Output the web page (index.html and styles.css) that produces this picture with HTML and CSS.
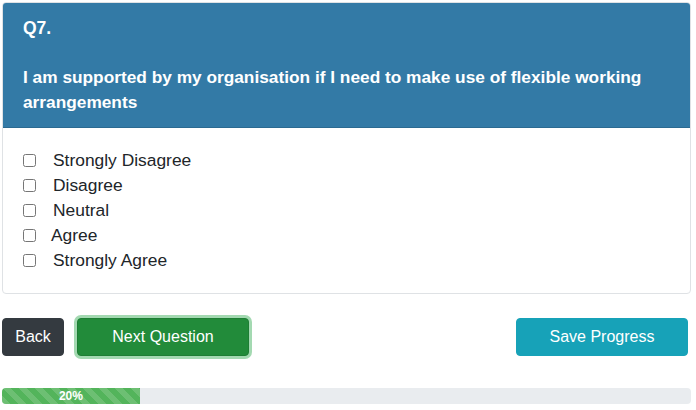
FILE: index.html
```html
<!DOCTYPE html>
<html>
<head>
<meta charset="utf-8">
<link rel="stylesheet" href="styles.css">
</head>
<body>
<div class="card">
  <div class="card-header">
    <div class="qnum">Q7.</div>
    <div class="qtext">I am supported by my organisation if I need to make use of flexible working arrangements</div>
  </div>
  <div class="card-body">
    <label class="opt"><input type="checkbox"><span class="lbl">Strongly Disagree</span></label>
    <label class="opt"><input type="checkbox"><span class="lbl">Disagree</span></label>
    <label class="opt"><input type="checkbox"><span class="lbl">Neutral</span></label>
    <label class="opt"><input type="checkbox"><span class="lbl agree">Agree</span></label>
    <label class="opt"><input type="checkbox"><span class="lbl">Strongly Agree</span></label>
  </div>
</div>
<div class="actions">
  <button class="btn btn-dark">Back</button>
  <button class="btn btn-success focus">Next Question</button>
  <span class="spacer"></span>
  <button class="btn btn-info">Save Progress</button>
</div>
<div class="progress">
  <div class="progress-bar" style="width:20%">20%</div>
</div>
</body>
</html>
```
FILE: styles.css
```css
html, body { margin: 0; padding: 0; background: #fff; }
body {
  padding: 2px 5px 0 2px;
  font-family: "Liberation Sans", Arial, sans-serif;
  color: #212529;
  font-size: 16px;
}
.card {
  border: 1px solid #dfe2e5;
  border-radius: 4px;
  overflow: hidden;
}
.card-header {
  background: #337aa6;
  color: #fff;
  font-weight: bold;
  padding: 15px 20px 12px 20px;
  border-bottom: 1px solid #2b6a91;
}
.qnum { font-size: 17.5px; line-height: 20px; margin-bottom: 27px; }
.qtext { font-size: 17.3px; line-height: 25px; }
.card-body {
  padding: 20px 20px 20px 20px;
  display: flex;
  flex-direction: column;
}
.opt {
  display: flex;
  align-items: center;
  height: 25px;
}
.opt input {
  margin: 0 17px 0 0;
  width: 13px;
  height: 13px;
}
.lbl { font-size: 17.4px; }
.lbl.agree { margin-left: -2px; }
.actions {
  display: flex;
  align-items: center;
  margin-top: 24px;
}
.spacer { flex: 1; }
.btn {
  font-family: "Liberation Sans", Arial, sans-serif;
  font-size: 16px;
  height: 38px;
  border: 1px solid transparent;
  border-radius: 4px;
  color: #fff;
  padding: 0 12px;
  cursor: pointer;
}
.btn-dark { background: #343a40; border-color: #343a40; width: 62px; }
.btn-success {
  background: #228b3a;
  border-color: #1e7e34;
  width: 172px;
  margin-left: 13px;
}
.btn-success.focus { box-shadow: 0 0 0 3px #a3d9b1; }
.btn-info { background: #17a2b8; border-color: #17a2b8; width: 172px; margin-right: 3px; }
.progress {
  margin-top: 32px;
  height: 16px;
  background: #e9ecef;
  border-radius: 4px;
  overflow: hidden;
  display: flex;
}
.progress-bar {
  background-color: #53b45b;
  background-image: linear-gradient(45deg, rgba(255,255,255,.15) 25%, transparent 25%, transparent 50%, rgba(255,255,255,.15) 50%, rgba(255,255,255,.15) 75%, transparent 75%, transparent);
  background-size: 16px 16px;
  color: #fff;
  font-size: 12px;
  font-weight: bold;
  line-height: 16px;
  text-align: center;
}
```
